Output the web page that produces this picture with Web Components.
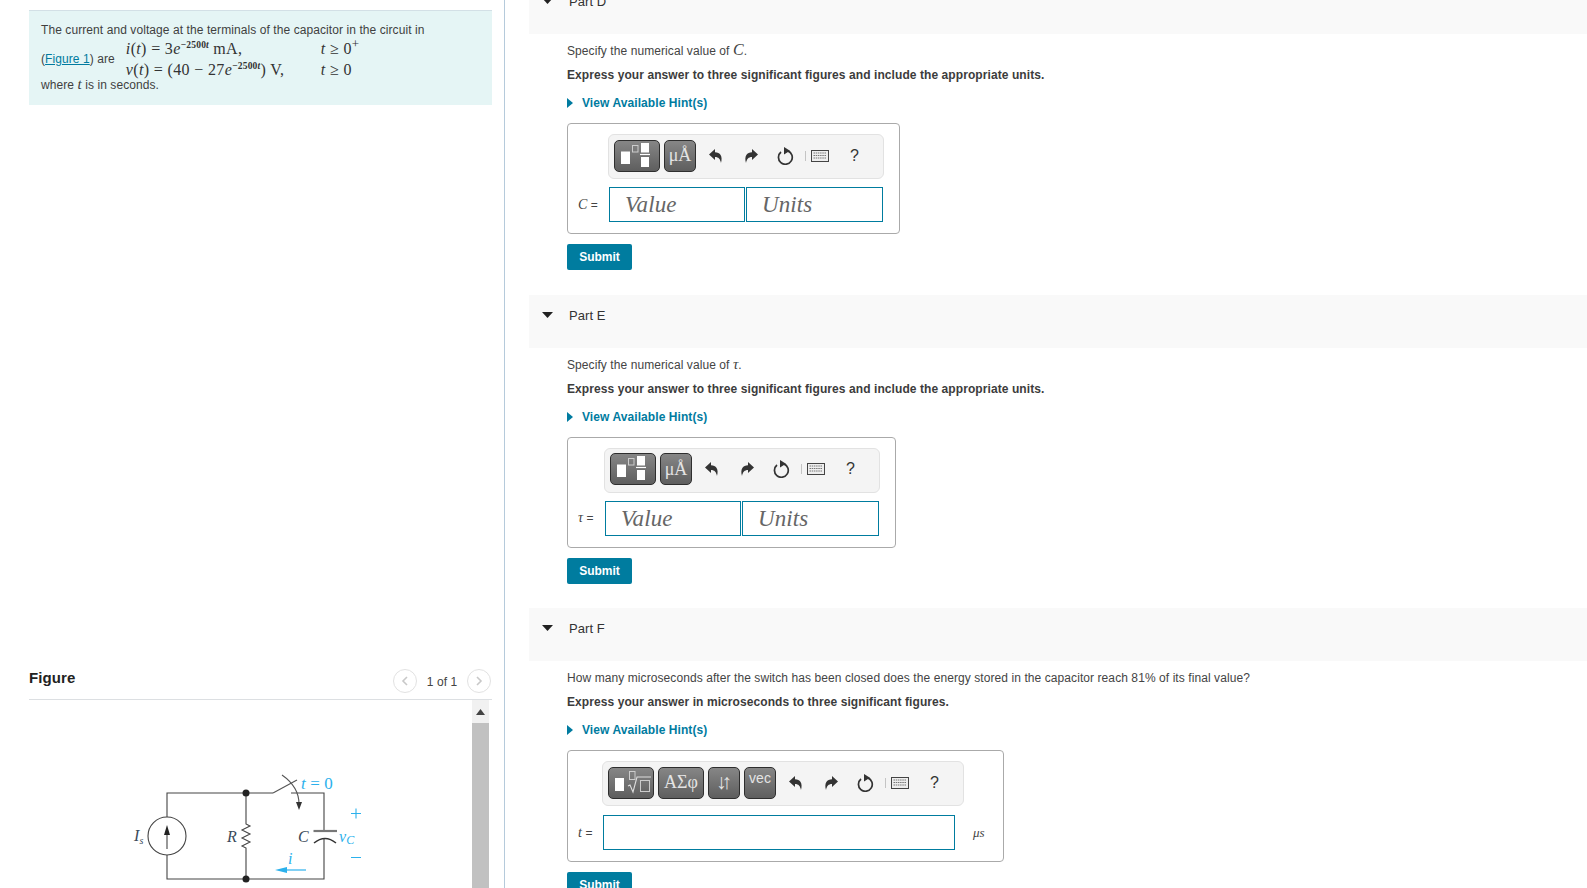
<!DOCTYPE html>
<html lang="en">
<head>
<meta charset="utf-8">
<title>Capacitor problem</title>
<style>
	html, body { margin: 0; height: 888px; overflow: hidden; background: #fff; }
	body { font: 12px/18px "Liberation Sans", Arial, sans-serif; color: #3a3a3a; }
	i.m { font-family: "Liberation Serif", serif; line-height: 0; }
</style>
</head>
<body>
<problem-layout>
	<intro-box slot="left"></intro-box>
	<figure-pane slot="left"></figure-pane>

	<part-section label="Part D">
		<span slot="prompt">Specify the numerical value of <i class="m" style="font-size:16px">C</i>.</span>
		<span slot="instruction">Express your answer to three significant figures and include the appropriate units.</span>
		<answer-box symbol="C" kind="units" style="--label:31px"></answer-box>
	</part-section>
	<part-section label="Part E">
		<span slot="prompt">Specify the numerical value of <i class="m" style="font-size:15px">τ</i>.</span>
		<span slot="instruction">Express your answer to three significant figures and include the appropriate units.</span>
		<answer-box symbol="τ" kind="units" style="--label:27px"></answer-box>
	</part-section>
	<part-section label="Part F">
		<span slot="prompt">How many microseconds after the switch has been closed does the energy stored in the capacitor reach 81% of its final value?</span>
		<span slot="instruction">Express your answer in microseconds to three significant figures.</span>
		<answer-box symbol="t" kind="number" unit="μs" style="--label:25px"></answer-box>
	</part-section>
</problem-layout>

<script>
class ProblemLayout extends HTMLElement {
	constructor() {
		super();
		this.attachShadow({ mode: 'open' });
		this.shadowRoot.innerHTML = `
			<style>
				:host { display: grid; grid-template-columns: 505px 1fr; height: 888px; overflow: hidden; letter-spacing: .08px; }
				.left { display: flex; flex-direction: column; height: 888px; border-right: 1px solid #b5cadb; box-sizing: border-box; padding: 10px 12px 0 29px; }
				.right { padding-left: 24px; margin-top: -19px; min-width: 0; }
			</style>
			<div class="left"><slot name="left"></slot></div>
			<div class="right"><slot></slot></div>`;
	}
}

class IntroBox extends HTMLElement {
	constructor() {
		super();
		this.attachShadow({ mode: 'open' });
		this.shadowRoot.innerHTML = `
			<style>
				:host { display: block; height: 95px; box-sizing: border-box; background: #e5f5f5; border-top: 1px solid #d3e0e6; padding: 10px 12px 0; font-size: 12px; line-height: 18px; color: #3f3f3f; }
				a { color: #007ba0; text-decoration: underline; }
				.row { display: flex; align-items: center; margin-top: -1px; }
				.eq { display: grid; grid-template-columns: 195px auto; grid-auto-rows: 21px; margin-left: 11px; align-items: center; font: 16px/21px "Liberation Serif", serif; letter-spacing: .35px; color: #333; white-space: nowrap; }
				.eq i { font-style: italic; }
				sup { font-size: 9.5px; line-height: 0; font-weight: bold; letter-spacing: .2px; }
				sup.plus { font-weight: normal; font-size: 13px; }
				.end { margin-top: -4px; }
				.end i { font-family: "Liberation Serif", serif; font-size: 15px; line-height: 0; }
			</style>
			<div>The current and voltage at the terminals of the capacitor in the circuit in</div>
			<div class="row">
				<span>(<a>Figure 1</a>) are</span>
				<div class="eq">
					<span><i>i</i>(<i>t</i>) = 3<i>e</i><sup>−2500<i>t</i></sup> mA,</span><span><i>t</i> ≥ 0<sup class="plus">+</sup></span>
					<span><i>v</i>(<i>t</i>) = (40 − 27<i>e</i><sup>−2500<i>t</i></sup>) V,</span><span><i>t</i> ≥ 0</span>
				</div>
			</div>
			<div class="end">where <i>t</i> is in seconds.</div>`;
	}
}

class FigurePane extends HTMLElement {
	constructor() {
		super();
		this.attachShadow({ mode: 'open' });
		this.shadowRoot.innerHTML = `
			<style>
				:host { display: flex; flex-direction: column; margin-top: auto; height: 224px; width: 463px; flex: none; }
				header { display: flex; align-items: center; height: 36px; box-sizing: border-box; border-bottom: 1px solid #dcdfe2; flex: none; padding: 0 1px 2px 0; }
				h2 { margin: -5px 0 0; font: bold 15px/18px "Liberation Sans", sans-serif; color: #222; flex: 1; }
				.nav { width: 24px; height: 24px; box-sizing: border-box; border: 1px solid #e2e2e2; border-radius: 50%; display: grid; place-items: center; }
				.count { width: 50px; margin-top: 2px; text-align: center; color: #444; font-size: 12px; }
				.view { display: flex; flex: 1; min-height: 0; overflow: hidden; }
				circuit-figure { flex: 1; }
				.bar { width: 17px; margin-right: 3px; display: flex; flex-direction: column; }
				.up { height: 23px; background: #f1f1f1; display: grid; place-items: center; }
				.thumb { flex: 1; background: #c1c1c1; }
			</style>
			<header>
				<h2>Figure</h2>
				<span class="nav"><svg width="8" height="12" viewBox="0 0 8 12"><path d="M6 2 2 6l4 4" fill="none" stroke="#c8c8c8" stroke-width="1.6"/></svg></span>
				<span class="count">1 of 1</span>
				<span class="nav"><svg width="8" height="12" viewBox="0 0 8 12"><path d="M2 2l4 4-4 4" fill="none" stroke="#c8c8c8" stroke-width="1.6"/></svg></span>
			</header>
			<div class="view">
				<circuit-figure></circuit-figure>
				<div class="bar">
					<div class="up"><svg width="9" height="6" viewBox="0 0 9 6"><path d="M4.5 0 9 6H0z" fill="#444"/></svg></div>
					<div class="thumb"></div>
				</div>
			</div>`;
	}
}

class CircuitFigure extends HTMLElement {
	constructor() {
		super();
		this.attachShadow({ mode: 'open' });
		this.shadowRoot.innerHTML = `
			<style>
				:host { display: block; }
				svg { display: block; }
				text { font-family: "Liberation Serif", serif; font-style: italic; font-size: 16px; fill: #3b4a5a; }
				text.blue { fill: #2cb1ec; }
			</style>
			<svg width="443" height="188" viewBox="29 700 443 188">
				<g fill="none" stroke="#444" stroke-width="1.1">
					<path d="M273 793H167V817M167 855V879H324V838M324 831V793H291"/>
					<path d="M246 793V824l4 2-8 4 8 4-8 4 8 4-8 4 4 2V879"/>
					<circle cx="167" cy="836" r="19"/>
					<path d="M167 849V832"/>
					<path d="M273 793 297 780" stroke="#555"/>
					<path d="M282 775C292 782 299 792 299 804" stroke="#555"/>
				</g>
				<path d="M167 825 170 835H164Z" fill="#222"/>
				<path d="M299 810 296 802H302Z" fill="#333"/>
				<circle cx="246" cy="793" r="3.5" fill="#222"/>
				<circle cx="246" cy="879" r="3.5" fill="#222"/>
				<path d="M313.500 831H337" stroke="#777" stroke-width="2.200"/>
				<path d="M314 843Q325 834 336 843" fill="none" stroke="#333" stroke-width="1.500"/>
				<path d="M306 870H282" stroke="#2cb1ec" stroke-width="1.200"/>
				<path d="M275 870 287 867V873Z" fill="#2cb1ec"/>
				<path d="M351 813.500H361M356 808.500V818.500M351 857.500H361" stroke="#2cb1ec" stroke-width="1.100"/>
				<text x="301" y="789" class="blue" style="font-size:17px">t<tspan style="font-style:normal"> = 0</tspan></text>
				<text x="134" y="841">I<tspan dy="3" style="font-size:10px">s</tspan></text>
				<text x="227" y="842">R</text>
				<text x="298" y="842">C</text>
				<text x="339" y="842" class="blue">v<tspan dy="2" style="font-size:12px">C</tspan></text>
				<text x="288" y="864" class="blue">i</text>
			</svg>`;
	}
}

class PartSection extends HTMLElement {
	constructor() {
		super();
		this.attachShadow({ mode: 'open' });
		this.shadowRoot.innerHTML = `
			<style>
				:host { display: block; padding-bottom: 24.5px; }
				header { height: 53px; background: #f9f9f9; display: flex; align-items: flex-start; padding: 12px 0 0 12px; box-sizing: border-box; color: #333; font-size: 13px; line-height: 18px; }
				header svg { margin: 5px 0 0 1px; }
				header span { margin-left: 16px; }
				.body { padding-left: 38px; }
				.line { height: 20px; line-height: 20px; font-size: 12px; color: #444; white-space: nowrap; }
				.prompt { margin-top: 7px; }
				.instruction { margin-top: 4px; color: #3c3c3c; font-weight: bold; }
				.hint { margin-top: 8px; height: 20px; display: flex; align-items: center; color: #007ba0; font-weight: bold; font-size: 12px; line-height: 20px; }
				.hint svg { margin-right: 9px; }
				.answer { margin-top: 10px; }
				button { display: block; margin-top: 10px; width: 65px; height: 26px; padding: 0; border: 0; border-radius: 2px; background: #007c9f; color: #fff; font: bold 12px "Liberation Sans", sans-serif; }
			</style>
			<header>
				<svg width="11" height="6" viewBox="0 0 11 6"><path d="M0 0H11L5.500 6Z" fill="#222"/></svg>
				<span></span>
			</header>
			<div class="body">
				<div class="line prompt"><slot name="prompt"></slot></div>
				<div class="line instruction"><slot name="instruction"></slot></div>
				<div class="hint">
					<svg width="6" height="10" viewBox="0 0 6 10"><path d="M0 0 6 5 0 10Z" fill="#007ba0"/></svg>
					View Available Hint(s)
				</div>
				<div class="answer"><slot></slot></div>
				<button>Submit</button>
			</div>`;
	}

	connectedCallback() {
		this.shadowRoot.querySelector('header span').textContent = this.getAttribute('label');
	}
}

class AnswerBox extends HTMLElement {
	constructor() {
		super();
		this.attachShadow({ mode: 'open' });
	}

	connectedCallback() {
		const withUnits = this.getAttribute('kind') === 'units';
		const symbol = this.getAttribute('symbol');
		const fields = withUnits
			? `<div class="field value"><span>Value</span></div><div class="field units"><span>Units</span></div>`
			: `<div class="field wide"></div><em class="unit">${this.getAttribute('unit')}</em>`;
		this.shadowRoot.innerHTML = `
			<style>
				:host { display: block; width: fit-content; box-sizing: border-box; border: 1px solid #aaa; border-radius: 4px; padding: 10px 15px 11px 10px; }
				math-toolbar { margin: 0 0 ${withUnits ? 8 : 9}px calc(var(--label) - 1px); }
				.row { display: flex; align-items: center; }
				.sym { width: var(--label); flex: none; box-sizing: border-box; font-size: 12px; color: #444; white-space: nowrap; }
				.sym i { font: italic 14px "Liberation Serif", serif; }
				.field { height: 35px; box-sizing: border-box; border: 1px solid #007c9f; font: italic 23px/33px "Liberation Serif", serif; color: #666; padding-left: 15px; }
				.value { width: 136px; margin-right: 1px; }
				.units { width: 137px; }
				.wide { width: 352px; }
				.unit { width: 33px; box-sizing: border-box; padding-left: 18px; font: italic 13px "Liberation Serif", serif; color: #444; white-space: nowrap; }
			</style>
			<math-toolbar kind="${withUnits ? 'units' : 'number'}"></math-toolbar>
			<div class="row"><span class="sym"><i>${symbol}</i> =</span>${fields}</div>`;
	}
}

class MathToolbar extends HTMLElement {
	constructor() {
		super();
		this.attachShadow({ mode: 'open' });
	}

	connectedCallback() {
		const templates = `<svg width="44" height="30" viewBox="0 0 44 30"><path d="M6 10.500h9V23H6zM26 2h8v9.500h-8zM26 16h8v10h-8z" fill="#fff"/><path d="M25 13.500h10" stroke="#fff" stroke-width="1.200"/><rect x="17.500" y="4.500" width="5.500" height="6.500" fill="none" stroke="#ccc"/></svg>`;
		const radical = `<svg width="44" height="30" viewBox="0 0 44 30"><path d="M6 10h9v13H6z" fill="#fff"/><rect x="20.500" y="3.500" width="5.500" height="8" fill="none" stroke="#ccc"/><path d="M19 18l2-1 3 7 4-15h14" fill="none" stroke="#ddd" stroke-width="1.100"/><rect x="31.500" y="12.500" width="9" height="11" fill="none" stroke="#ccc"/></svg>`;
		const buttons = this.getAttribute('kind') === 'units'
			? `<button class="w46">${templates}</button><button class="w32 serif">μÅ</button>`
			: `<button class="w46">${radical}</button><button class="w46 serif">ΑΣφ</button><button class="w32 serif arrows">↓↑</button><button class="w32 vec">vec</button>`;
		this.shadowRoot.innerHTML = `
			<style>
				:host { display: flex; width: fit-content; align-items: center; height: 45px; box-sizing: border-box; background: #f4f4f4; border: 1px solid #e2e2e2; border-radius: 6px; padding: 0 11px 2px 5px; gap: 4px; }
				button { height: 32px; padding: 0; box-sizing: border-box; border: 1px solid #2e2e2e; border-radius: 5px; background: linear-gradient(#868686, #5e5e5e); color: #e4e4e4; display: grid; place-items: center; flex: none; }
				.w46 { width: 46px; }
				.w32 { width: 32px; }
				.serif { font: 18px "Liberation Serif", serif; }
				.arrows { font-size: 21px; letter-spacing: -5px; padding-right: 5px; }
				.vec { font: 14px "Liberation Sans", sans-serif; align-items: start; padding-top: 2px; }
				.tool { width: 35px; display: grid; place-items: center; flex: none; margin-left: -4px; color: #333; }
				.first { margin-left: -2px; }
				.sep { width: 1px; height: 10px; background: #c4c4c4; margin-left: -2px; }
				.kbd { width: 28px; display: grid; place-items: center; margin-left: -4px; }
				.help { font: 16px "Liberation Sans", sans-serif; color: #333; margin-left: -1px; }
			</style>
			${buttons}
			<span class="tool first"><svg width="14" height="14" viewBox="0 0 14 14"><path d="M0 5.500 6 0v3.200C11 3.200 14 7 12 14 11.200 10 9.500 8 6 8v3Z" fill="#333"/></svg></span>
			<span class="tool"><svg width="14" height="14" viewBox="0 0 14 14"><path d="M14 5.500 8 0v3.200C3 3.200 0 7 2 14 2.800 10 4.500 8 8 8v3Z" fill="#333"/></svg></span>
			<span class="tool"><svg width="17" height="18" viewBox="0 0 17 18"><path d="M10.800 3.900A6.900 6.900 0 1 1 4 5" fill="none" stroke="#333" stroke-width="1.700"/><path d="M7 0 13 3.700 7 7.400Z" fill="#333"/></svg></span>
			<span class="sep"></span>
			<span class="kbd"><svg width="18" height="12" viewBox="0 0 18 12"><rect x=".5" y=".5" width="17" height="11" fill="#eee" stroke="#444"/><path d="M2.500 3h13M2.500 5.500h13M2.500 8h13" stroke="#777" stroke-width="1.200" stroke-dasharray="1.500 .7"/></svg></span>
			<span class="tool help">?</span>`;
	}
}

customElements.define('problem-layout', ProblemLayout);
customElements.define('intro-box', IntroBox);
customElements.define('figure-pane', FigurePane);
customElements.define('circuit-figure', CircuitFigure);
customElements.define('part-section', PartSection);
customElements.define('answer-box', AnswerBox);
customElements.define('math-toolbar', MathToolbar);
</script>
</body>
</html>
